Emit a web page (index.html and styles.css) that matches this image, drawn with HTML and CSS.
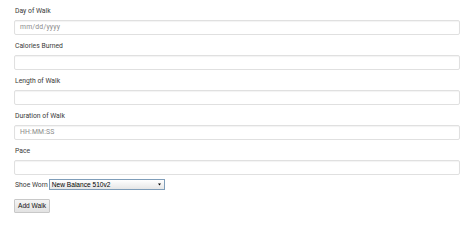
FILE: index.html
```html
<!DOCTYPE html>
<html>
<head>
<meta charset="utf-8">
<link rel="stylesheet" href="styles.css">
</head>
<body>
<form class="walk-form">
  <div class="field">
    <label class="field-label">Day of Walk</label>
    <div class="text-input placeholder">mm/dd/yyyy</div>
  </div>
  <div class="field">
    <label class="field-label">Calories Burned</label>
    <div class="text-input"></div>
  </div>
  <div class="field">
    <label class="field-label">Length of Walk</label>
    <div class="text-input"></div>
  </div>
  <div class="field">
    <label class="field-label">Duration of Walk</label>
    <div class="text-input placeholder">HH:MM:SS</div>
  </div>
  <div class="field field-last">
    <label class="field-label">Pace</label>
    <div class="text-input"></div>
  </div>
  <div class="shoe-row">
    <span class="shoe-label">Shoe Worn</span>
    <div class="shoe-select">
      <span class="shoe-value">New Balance 510v2</span>
      <span class="shoe-arrow"><svg width="5" height="5" viewBox="0 0 5 5"><path d="M1 1.5 L4 1.5 L2.5 3.5 Z" fill="#000"/></svg></span>
    </div>
  </div>
  <div class="actions">
    <span class="add-button">Add Walk</span>
  </div>
</form>
</body>
</html>
```
FILE: styles.css
```css
html, body {
  margin: 0;
  padding: 0;
  background: #ffffff;
}
body {
  font-family: Roboto, "Liberation Sans", sans-serif;
  color: #333333;
}
.walk-form {
  padding: 7px 14px 0 14px;
  display: flex;
  flex-direction: column;
}
.field {
  display: flex;
  flex-direction: column;
  margin-bottom: 7px;
}
.field-last {
  margin-bottom: 4px;
}
.field-label {
  font-size: 6.8px;
  line-height: 9px;
  height: 9px;
  margin: 0 0 4px 1px;
  color: #3a3a3a;
}
.text-input {
  box-sizing: border-box;
  height: 15px;
  width: 446px;
  border: 1px solid #e0e0e0;
  border-radius: 2px;
  box-shadow: inset 0 1px 1px rgba(0,0,0,0.05);
  font-size: 6.8px;
  line-height: 13px;
  padding-left: 5px;
  letter-spacing: 0.2px;
  color: #555;
}
.text-input.placeholder {
  color: #8a8a8a;
}
.shoe-row {
  display: flex;
  align-items: center;
  height: 11px;
}
.shoe-label {
  font-size: 6.8px;
  color: #3a3a3a;
  margin-left: 1px;
  margin-right: 1px;
}
.shoe-select {
  box-sizing: border-box;
  width: 116px;
  height: 11px;
  border: 1px solid #7f9db9;
  background: linear-gradient(#ffffff, #e6e6e6);
  display: flex;
  align-items: center;
  justify-content: space-between;
  font-family: "Liberation Sans", Arial, sans-serif;
  font-size: 6.6px;
  color: #000;
  padding-left: 2px;
}
.shoe-value {
  line-height: 9px;
}
.shoe-arrow {
  width: 7px;
  height: 9px;
  display: flex;
  align-items: center;
  justify-content: center;
  margin-right: 1px;
}
.actions {
  margin-top: 9px;
  display: flex;
}
.add-button {
  box-sizing: border-box;
  height: 14px;
  padding: 0 3px;
  border: 1px solid #c8c8c8;
  border-radius: 1px;
  background: linear-gradient(#f4f4f4, #e2e2e2);
  font-family: "Liberation Sans", Arial, sans-serif;
  font-size: 6.6px;
  line-height: 12px;
  color: #111;
}
```
